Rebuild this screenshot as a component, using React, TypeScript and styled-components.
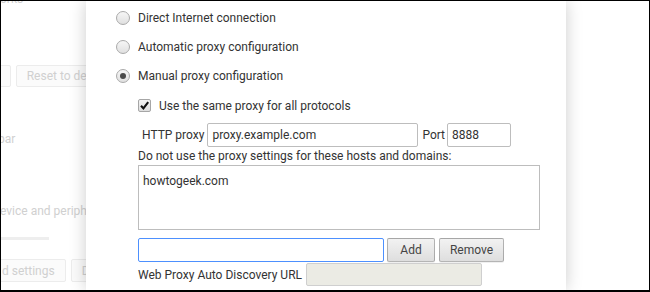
import React from "react"
import styled, { createGlobalStyle } from "styled-components"

const GlobalStyle = createGlobalStyle`
  html, body {
    margin: 0;
    padding: 0;
    background: #fff;
  }
  body {
    font-family: Roboto, "Liberation Sans", Arial, sans-serif;
  }
  * {
    box-sizing: border-box;
  }
`

const Frame = styled.div`
  width: 650px;
  height: 292px;
  display: flex;
  overflow: hidden;
  background: #fff;
  border: 1px solid #000;
  border-bottom-width: 2px;
`

/* settings page dimmed behind the dialog */
const Backdrop = styled.div`
  width: 85px;
  flex-shrink: 0;
  overflow: hidden;
  display: flex;
  flex-direction: column;
  font-size: 12px;
  line-height: 16px;
  color: #d0d0d0;
  white-space: nowrap;
`

const FadedText = styled.div<{ $top: number; $shift?: number }>`
  margin-top: ${p => p.$top}px;
  margin-left: ${p => p.$shift ?? 0}px;
`

const FadedRow = styled.div<{ $top: number; $height: number }>`
  display: flex;
  gap: 5px;
  margin-top: ${p => p.$top}px;
  height: ${p => p.$height}px;
  flex-shrink: 0;
`

const FadedButton = styled.div<{ $shift?: number }>`
  flex-shrink: 0;
  display: flex;
  align-items: center;
  padding: 0 10px;
  margin-left: ${p => p.$shift ?? 0}px;
  border: 1px solid #ececec;
  border-radius: 2px;
  background: #fbfbfb;
`

const FadedTrack = styled.div`
  margin-top: 18px;
  width: 48px;
  height: 3px;
  flex-shrink: 0;
  background: #eeeeee;
`

const Dialog = styled.div`
  width: 480px;
  flex-shrink: 0;
  position: relative;
  z-index: 1;
  background: #fff;
  box-shadow: 0 0 16px rgba(0, 0, 0, 0.2);
  padding: 2px 0 0 30px;
  font-size: 12px;
  line-height: 16px;
  color: #333;
  white-space: nowrap;
`

const OptionRow = styled.label`
  display: flex;
  align-items: center;
  gap: 8px;
  height: 29px;
`

const Radio = styled.span<{ $checked?: boolean }>`
  width: 14px;
  height: 14px;
  flex-shrink: 0;
  border-radius: 50%;
  border: 1px solid #aaaaaa;
  background: linear-gradient(#f6f6f6, #e0e0e0);
  display: flex;
  align-items: center;
  justify-content: center;
  &::after {
    content: "";
    display: ${p => (p.$checked ? "block" : "none")};
    width: 6px;
    height: 6px;
    border-radius: 50%;
    background: #4a4a4a;
  }
`

const Manual = styled.div`
  margin-left: 22px;
  display: flex;
  flex-direction: column;
`

const CheckRow = styled.label`
  display: flex;
  align-items: center;
  gap: 8px;
  height: 31px;
`

const Checkbox = styled.span`
  width: 13px;
  height: 13px;
  flex-shrink: 0;
  border: 1px solid #a6a6a6;
  border-radius: 2px;
  background: linear-gradient(#f4f4f4, #dedede);
  display: flex;
  align-items: center;
  justify-content: center;
`

const ProxyRow = styled.div`
  display: flex;
  align-items: center;
  margin-top: 2px;
  height: 24px;
`

const FieldLabel = styled.span<{ $gap?: number }>`
  margin-left: ${p => p.$gap ?? 0}px;
`

const Input = styled.div<{ $width: number; $gap?: number; $focused?: boolean; $disabled?: boolean }>`
  width: ${p => p.$width}px;
  height: 100%;
  margin-left: ${p => p.$gap ?? 0}px;
  flex-shrink: 0;
  display: flex;
  align-items: center;
  padding: 0 4px;
  border: 1px solid ${p => (p.$focused ? "#4d90fe" : p.$disabled ? "#cfcfcf" : "#bdbdbd")};
  border-radius: 2px;
  background: ${p => (p.$disabled ? "#ebebe4" : "#fff")};
  color: #333;
`

const Hint = styled.div`
  margin-top: 1px;
`

const HostList = styled.div`
  margin-top: 1px;
  width: 402px;
  height: 65px;
  border: 1px solid #bdbdbd;
  padding: 7px 4px;
`

const AddRow = styled.div`
  display: flex;
  align-items: center;
  margin-top: 8px;
  height: 24px;
`

const Button = styled.div<{ $width: number; $gap: number }>`
  width: ${p => p.$width}px;
  height: 100%;
  margin-left: ${p => p.$gap}px;
  display: flex;
  align-items: center;
  justify-content: center;
  border: 1px solid rgba(0, 0, 0, 0.25);
  border-radius: 2px;
  background: linear-gradient(#f2f2f2, #dedede);
  color: #444;
  box-shadow: 0 1px 0 rgba(0, 0, 0, 0.06);
`

const WpadRow = styled.div`
  display: flex;
  align-items: center;
  margin-top: 1px;
  height: 23px;
`

const Rest = styled.div`
  flex: 1;
`

function CheckMark() {
  return (
    <svg width="11" height="11" viewBox="0 0 11 11">
      <path d="M2 5.8 L4.4 8.3 L9.2 2.2" fill="none" stroke="#111" strokeWidth="2.1" />
    </svg>
  )
}

export default function App() {
  return (
    <>
      <GlobalStyle />
      <Frame>
        <Backdrop>
          <FadedText $top={-10} $shift={-1}>orks</FadedText>
          <FadedRow $top={58} $height={22}>
            <FadedButton $shift={-40}>Clear</FadedButton>
            <FadedButton>Reset to default</FadedButton>
          </FadedRow>
          <FadedText $top={44} $shift={-3}>bar</FadedText>
          <FadedText $top={56} $shift={-1}>evice and peripherals</FadedText>
          <FadedTrack />
          <FadedRow $top={19} $height={23}>
            <FadedButton $shift={-10}>d settings</FadedButton>
            <FadedButton>Disable</FadedButton>
          </FadedRow>
        </Backdrop>

        <Dialog>
          <OptionRow>
            <Radio />
            Direct Internet connection
          </OptionRow>
          <OptionRow>
            <Radio />
            Automatic proxy configuration
          </OptionRow>
          <OptionRow>
            <Radio $checked />
            Manual proxy configuration
          </OptionRow>

          <Manual>
            <CheckRow>
              <Checkbox>
                <CheckMark />
              </Checkbox>
              Use the same proxy for all protocols
            </CheckRow>
            <ProxyRow>
              <FieldLabel $gap={4}>HTTP proxy</FieldLabel>
              <Input $width={211} $gap={3}>proxy.example.com</Input>
              <FieldLabel $gap={4}>Port</FieldLabel>
              <Input $width={64} $gap={2}>8888</Input>
            </ProxyRow>
            <Hint>Do not use the proxy settings for these hosts and domains:</Hint>
            <HostList>howtogeek.com</HostList>
            <AddRow>
              <Input $width={246} $focused />
              <Button $width={48} $gap={3}>Add</Button>
              <Button $width={65} $gap={4}>Remove</Button>
            </AddRow>
            <WpadRow>
              <FieldLabel>Web Proxy Auto Discovery URL</FieldLabel>
              <Input $width={176} $gap={4} $disabled />
            </WpadRow>
          </Manual>
        </Dialog>

        <Rest />
      </Frame>
    </>
  )
}
